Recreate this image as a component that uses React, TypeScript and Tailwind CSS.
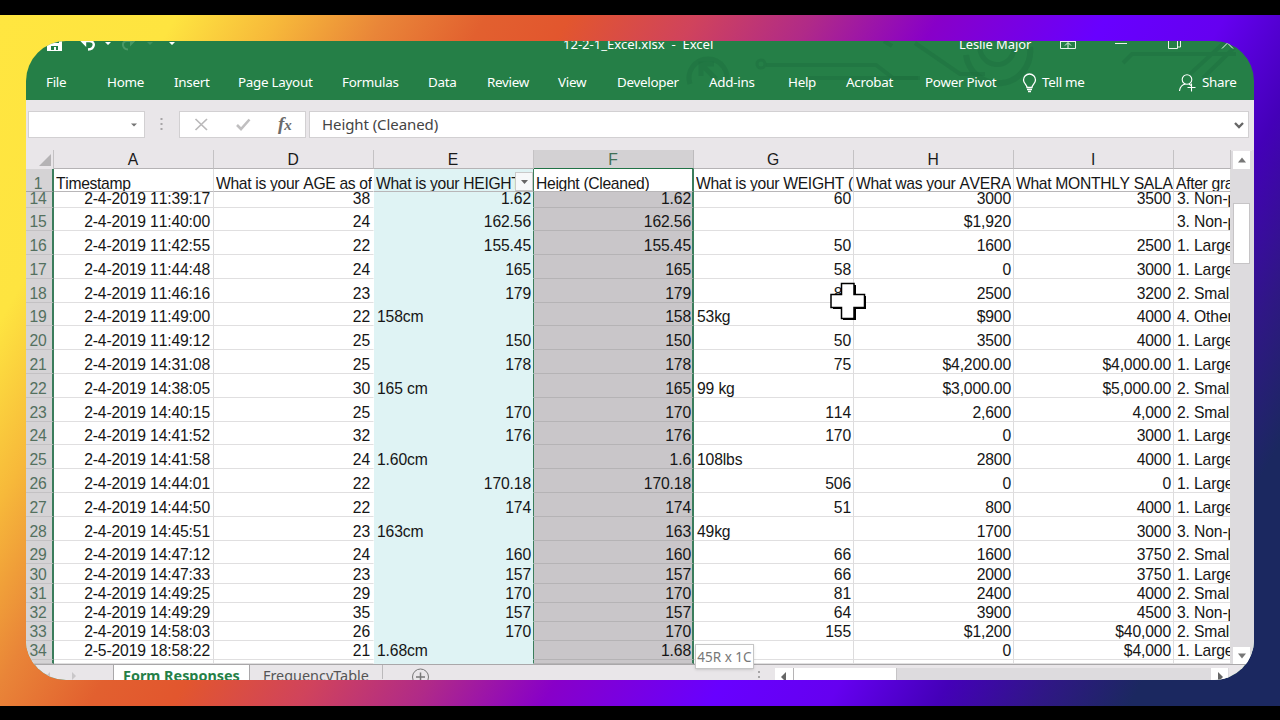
import React from 'react';
import clsx from 'clsx';

const ribbonTabs = [
  { name: 'File', width: 'w-[61px]' },
  { name: 'Home', width: 'w-[67px]' },
  { name: 'Insert', width: 'w-[64px]' },
  { name: 'Page Layout', width: 'w-[104px]' },
  { name: 'Formulas', width: 'w-[86px]' },
  { name: 'Data', width: 'w-[59px]' },
  { name: 'Review', width: 'w-[71px]' },
  { name: 'View', width: 'w-[59px]' },
  { name: 'Developer', width: 'w-[92px]' },
  { name: 'Add-ins', width: 'w-[79px]' },
  { name: 'Help', width: 'w-[58px]' },
  { name: 'Acrobat', width: 'w-[79px]' },
  { name: 'Power Pivot', width: 'w-[97px]' },
];

const columns = [
  { id: 'A', width: 'w-[160px]', title: 'Timestamp' },
  { id: 'D', width: 'w-[160px]', title: 'What is your AGE as of' },
  { id: 'E', width: 'w-[160px]', title: 'What is your HEIGHT' },
  { id: 'F', width: 'w-[160px]', title: 'Height (Cleaned)' },
  { id: 'G', width: 'w-[160px]', title: 'What is your WEIGHT (' },
  { id: 'H', width: 'w-[160px]', title: 'What was your AVERA' },
  { id: 'I', width: 'w-[160px]', title: 'What MONTHLY SALA' },
  { id: '', width: 'w-[57px]', title: 'After gra' },
];

const LARGE = '1. Large';
const SMALL = '2. Small';
const NONPROFIT = '3. Non-p';

// [row, timestamp, age, height, cleaned height, weight, average, salary, employer]
const rows: string[][] = [
  ['14', '2-4-2019 11:39:17', '38', '1.62', '1.62', '60', '3000', '3500', NONPROFIT],
  ['15', '2-4-2019 11:40:00', '24', '162.56', '162.56', '', '$1,920', '', NONPROFIT],
  ['16', '2-4-2019 11:42:55', '22', '155.45', '155.45', '50', '1600', '2500', LARGE],
  ['17', '2-4-2019 11:44:48', '24', '165', '165', '58', '0', '3000', LARGE],
  ['18', '2-4-2019 11:46:16', '23', '179', '179', '85', '2500', '3200', SMALL],
  ['19', '2-4-2019 11:49:00', '22', '158cm', '158', '53kg', '$900', '4000', '4. Other'],
  ['20', '2-4-2019 11:49:12', '25', '150', '150', '50', '3500', '4000', LARGE],
  ['21', '2-4-2019 14:31:08', '25', '178', '178', '75', '$4,200.00', '$4,000.00', LARGE],
  ['22', '2-4-2019 14:38:05', '30', '165 cm', '165', '99 kg', '$3,000.00', '$5,000.00', SMALL],
  ['23', '2-4-2019 14:40:15', '25', '170', '170', '114', '2,600', '4,000', SMALL],
  ['24', '2-4-2019 14:41:52', '32', '176', '176', '170', '0', '3000', LARGE],
  ['25', '2-4-2019 14:41:58', '24', '1.60cm', '1.6', '108lbs', '2800', '4000', LARGE],
  ['26', '2-4-2019 14:44:01', '22', '170.18', '170.18', '506', '0', '0', LARGE],
  ['27', '2-4-2019 14:44:50', '22', '174', '174', '51', '800', '4000', LARGE],
  ['28', '2-4-2019 14:45:51', '23', '163cm', '163', '49kg', '1700', '3000', NONPROFIT],
  ['29', '2-4-2019 14:47:12', '24', '160', '160', '66', '1600', '3750', SMALL],
  ['30', '2-4-2019 14:47:33', '23', '157', '157', '66', '2000', '3750', LARGE],
  ['31', '2-4-2019 14:49:25', '29', '170', '170', '81', '2400', '4000', SMALL],
  ['32', '2-4-2019 14:49:29', '35', '157', '157', '64', '3900', '4500', NONPROFIT],
  ['33', '2-4-2019 14:58:03', '26', '170', '170', '155', '$1,200', '$40,000', SMALL],
  ['34', '2-5-2019 18:58:22', '21', '1.68cm', '1.68', '', '0', '$4,000', LARGE],
  ['', '', '', '', '', '', '', '', ''],
];

function rowHeight(index: number) {
  if (index === 0) return 'h-[15.5px]';
  if (index === rows.length - 1) return 'h-[4.2px]';
  return index <= 15 ? 'h-[23.8px]' : 'h-[19.06px]';
}

// Free text (with units) sits left, numbers and dates sit right
function isText(value: string, col: number) {
  return col === 7 || /[a-z]/.test(value);
}

function Circuit() {
  return (
    <svg className="absolute inset-0 h-[59px] w-[1228px]" viewBox="26 41 1228 59" fill="none" stroke="#1c6f3e" strokeOpacity="0.45">
      <path d="M690 84a19 19 0 1 1 36 0" strokeWidth="5" />
      <path d="M716 79 702 65M701 76V64h13" strokeWidth="5" />
      <circle cx="761" cy="64" r="4" strokeWidth="3" />
      <path d="M766 65h110l17 13h25" strokeWidth="4" />
      <path d="M808 78h112M915 43l45 31h25M884 41l8 5" strokeWidth="4" />
      <path d="M966 55a30 30 0 0 0 64-8" strokeWidth="6" />
      <path d="M980 46a16 16 0 0 0 34 3" strokeWidth="5" />
      <path d="M1123 63 1132 54h104M1190 74l36-33M1203 78l38-37" strokeWidth="4" />
    </svg>
  );
}

function TitleBar() {
  return (
    <div className="relative -mt-[10px] flex h-[33px] shrink-0 text-white">
      <svg className="h-[26px] w-[160px] shrink-0" viewBox="26 31 160 26" fill="none">
        <path d="M47 36h15v15H47z" fill="#fff" />
        <path d="M50 36h9v7h-9zM51 46h7v4h-2v-3h-2v3h-3z" fill="#257f47" />
        <path d="M79 38l6 6v-3h4c7 0 6 8-1 8.500" stroke="#fff" strokeWidth="2.4" />
        <path d="M105 42h6l-3 3zM169 42h6l-3 3z" fill="#fff" />
        <path d="M137 38l-6 6v-3h-4c-6 0-5 8 1 8.500" stroke="#58a373" strokeOpacity="0.7" strokeWidth="2" />
        <path d="M147 42h6l-3 3z" fill="#3f9060" />
      </svg>
      <div className="ml-[377px] h-[26px] w-[152px] shrink-0 whitespace-pre text-[13.100px] leading-[26px] tracking-[-0.03px]">12-2-1_Excel.xlsx  -  Excel</div>
      <div className="ml-[244px] h-[26px] w-[80px] shrink-0 whitespace-nowrap text-[12.900px] leading-[26px] tracking-[-0.05px]">Leslie Major</div>
      <svg className="ml-[11px] h-[26px] w-[200px] shrink-0" viewBox="1050 31 200 26" fill="none" stroke="#e9f4ec">
        <path d="M1060.500 38.500h15v10h-15zM1068 49v-6M1065 45.500l3-3 3 3M1061 41.500h14M1115 43.500h12" />
        <path d="M1168.500 40.500h9v8h-9zM1171 40v-2h9.500v9h-2.500M1222 48.500l11-11M1222 37.500l11 11" />
      </svg>
    </div>
  );
}

function Ribbon() {
  return (
    <div className="relative flex h-9 shrink-0 items-center pt-px pl-5 text-[13.400px] tracking-[-0.27px] whitespace-nowrap text-white">
      {ribbonTabs.map((tab) => (
        <div key={tab.name} className={clsx('shrink-0', tab.width)}>{tab.name}</div>
      ))}
      <svg className="h-5 w-4 shrink-0" viewBox="0 0 16 20" fill="none" stroke="#fff" strokeWidth="1.3">
        <path d="M5 14.500c0-3-3.500-4-3.500-7.500a6 6 0 0 1 12 0c0 3.500-3.500 4.500-3.500 7.500zM5 16.500h5M6 18.500h3" />
      </svg>
      <div className="ml-1 w-[137px] shrink-0">Tell me</div>
      <svg className="h-5 w-[17px] shrink-0" viewBox="0 0 17 20" fill="none" stroke="#fff" strokeWidth="1.1">
        <circle cx="8" cy="6.500" r="4.800" />
        <path d="M.5 18c.5-4 2.500-6.500 6-7M10 11l2 1.500M12.500 10.500v8M8.500 14.500h8" />
      </svg>
      <div className="ml-1.5">Share</div>
    </div>
  );
}

function FormulaBar() {
  return (
    <div className="flex h-[50px] shrink-0 bg-[#e9e6e9] pt-[11px] pl-0.5">
      <div className="flex h-[27px] w-[117px] shrink-0 items-center justify-end border border-[#d2d0d2] bg-white pr-[7px]">
        <svg className="h-1 w-1.5" viewBox="0 0 6 4"><path d="M0 .5h6L3 3.500z" fill="#747474" /></svg>
      </div>
      <svg className="h-[27px] w-[34px] shrink-0" viewBox="0 0 34 27" fill="#a7a5a7">
        <path d="M15.500 7h2v2h-2zM15.500 12h2v2h-2zM15.500 17h2v2h-2z" />
      </svg>
      <div className="flex h-[27px] w-[127px] shrink-0 items-center border border-[#d2d0d2] bg-white">
        <svg className="ml-[14px] h-[13px] w-[15px]" viewBox="0 0 15 13" fill="none" stroke="#bab9ba" strokeWidth="1.700"><path d="M1.500 1l11.500 11M13 1 1.500 12" /></svg>
        <svg className="ml-[27px] h-[13px] w-[15px]" viewBox="0 0 15 13" fill="none" stroke="#c0bfc0" strokeWidth="2.600"><path d="M1 7l4 4 8.500-9.500" /></svg>
        <span className="-mt-0.5 ml-[27px] font-['Liberation_Serif',serif] text-[19px] leading-none font-bold text-[#6b6b6b] italic">f<span className="text-[15px]">x</span></span>
      </div>
      <div className="ml-[3px] flex h-[27px] w-[940px] shrink-0 items-center justify-between border border-[#d2d0d2] bg-white pr-[4px] pl-3">
        <span className="text-[15px] tracking-[-0.08px] text-[#444]">Height (Cleaned)</span>
        <svg className="h-2 w-2.5" viewBox="0 0 10 8" fill="none" stroke="#666" strokeWidth="2.300"><path d="M1 2l4 4 4-4" /></svg>
      </div>
    </div>
  );
}

function ColumnHeaders() {
  return (
    <div className="flex h-[18.500px] shrink-0 bg-[#e9e6e9]">
      <div className="flex w-[28px] shrink-0 items-end justify-end border-r border-[#c4c2c4] pr-0.5 pb-[3px]">
        <svg className="h-3 w-3" viewBox="0 0 12 12"><path d="M12 0v12H0z" fill="#b5b3b5" /></svg>
      </div>
      {columns.map((col) => (
        <div
          key={col.title}
          className={clsx(
            'shrink-0 border-b pt-px pr-px text-center leading-[18px]',
            col.width,
            col.id === 'F'
              ? 'border-r border-r-[#bdbbbd] border-b-[#217346] bg-[#d3d1d3] text-[#3f6f55]'
              : 'border-r border-r-[#c4c2c4] border-b-[#b5b3b5] text-[#1a1a1a]',
          )}
        >
          {col.id}
        </div>
      ))}
    </div>
  );
}

function HeaderRow() {
  return (
    <div className="flex h-[23.500px] shrink-0 items-stretch">
      <div className="flex w-[28px] shrink-0 items-end justify-center border-r-2 border-b border-r-[#3b7d5c] border-b-[#a5a3a5] bg-[#d5d3d5] pr-0.5 leading-[15px] text-[#53705f]">1</div>
      {columns.map((col) => (
        <div
          key={col.title}
          className={clsx(
            'flex shrink-0 items-end overflow-hidden border-r border-b border-b-[#b8b6b8] pl-0.5 text-[15.700px] leading-[18px] tracking-[-0.33px] whitespace-nowrap',
            col.width,
            col.id === 'E' && 'justify-between border-r-[#3b7d5c] bg-[#dff3f4]',
            col.id === 'F' && 'border-r-2 border-r-[#3b7d5c]',
            col.id === 'D' && 'border-r-transparent',
            !['D', 'E', 'F'].includes(col.id) && 'border-r-[#dddcdd]',
          )}
        >
          <span className="-mb-0.5 min-w-0 overflow-hidden">{col.title}</span>
          {col.id === 'E' && (
            <span className="flex h-[19px] w-[18px] shrink-0 items-center justify-center border border-[#c9c9c9] bg-[#f6f8f9]">
              <svg className="h-1 w-[7px]" viewBox="0 0 7 4"><path d="M0 0h7L3.500 4z" fill="#666" /></svg>
            </span>
          )}
        </div>
      ))}
    </div>
  );
}

function DataRow({ row, index }: { row: string[]; index: number }) {
  const [num, ...cells] = row;
  return (
    <div className={clsx('flex shrink-0 items-stretch overflow-hidden', rowHeight(index))}>
      <div className="flex w-[28px] shrink-0 items-end justify-center border-r-2 border-b border-r-[#3b7d5c] border-b-[#c3c1c3] bg-[#d5d3d5] pr-0.5 leading-[16px] text-[#53705f]">
        {num}
      </div>
      {cells.map((value, i) => (
        <div
          key={i}
          className={clsx(
            'flex shrink-0 items-end overflow-hidden border-r border-b leading-[16px] whitespace-nowrap',
            columns[i].width,
            isText(value, i) ? 'pl-[3px]' : 'justify-end',
            i === 0 && 'border-r-[#dddcdd] border-b-[#e0dfe0] pr-[3px]',
            i === 1 && 'border-r-transparent border-b-[#e0dfe0] pr-[3px]',
            i === 2 && 'border-r-[#3b7d5c] border-b-transparent bg-[#dff3f4] pr-0.5',
            i === 3 && 'border-r-2 border-r-[#3b7d5c] border-b-[#b5b3b5] bg-[#c9c6c9] pr-px',
            i > 3 && 'border-r-[#dddcdd] border-b-[#e0dfe0] pr-0.5',
          )}
        >
          {value}
        </div>
      ))}
    </div>
  );
}

function VerticalScrollbar() {
  return (
    <div className="flex w-[23px] shrink-0 flex-col bg-[#dddbde] pr-1 pl-0.5">
      <div className="-mx-0.5 h-[1px] shrink-0 bg-[#e9e6e9]" />
      <div className="flex h-[18px] shrink-0 items-center justify-center bg-white">
        <svg className="h-1.5 w-2" viewBox="0 0 8 6"><path d="M0 5.500h8L4 .5z" fill="#777" /></svg>
      </div>
      <div className="h-[34px] shrink-0" />
      <div className="h-[61px] shrink-0 border border-[#c6c4c6] bg-white" />
      <div className="flex-1" />
      <div className="flex h-[17px] shrink-0 items-center justify-center bg-white">
        <svg className="h-1.5 w-2" viewBox="0 0 8 6"><path d="M0 .5h8L4 5.500z" fill="#777" /></svg>
      </div>
    </div>
  );
}

function SheetTabs() {
  return (
    <div className="flex h-4 shrink-0 overflow-hidden border-t border-[#a9a7a9] bg-[#e9e6e9] whitespace-nowrap">
      <div className="w-[88px] shrink-0 border-r border-[#a9a7a9]">
        <svg className="h-4 w-[87px]" viewBox="26 665 87 16" fill="#c9c7c9"><path d="M72 672v8l4-4zM50 672v8l-4-4z" /></svg>
      </div>
      <div className="-mt-px w-[135px] shrink-0 bg-white pl-[9px] text-[14.400px] leading-6 font-bold text-[#257f47]">Form Responses</div>
      <div className="w-[133px] shrink-0 border-l border-[#a9a7a9] pl-[13px] text-[14.400px] leading-[22px] text-[#555]">FrequencyTable</div>
      <div className="h-3.5 w-[30px] shrink-0 border-l border-[#bbb9bb]" />
      <svg className="h-4 w-[18px] shrink-0" viewBox="412 665 18 16" fill="none" stroke="#777">
        <circle cx="420.500" cy="677" r="8" />
        <path d="M420.500 672.500v9M416 677h9" strokeWidth="1.500" />
      </svg>
      <svg className="ml-[325px] h-4 w-2 shrink-0" viewBox="0 0 8 16" fill="#a7a5a7"><path d="M3 6h2v2H3zM3 11h2v2H3z" /></svg>
      <div className="mt-[3px] ml-[12px] flex h-4 w-[454px] shrink-0 bg-[#dddbde]">
        <div className="w-[19px] shrink-0 border-r border-[#b5b3b5] bg-white">
          <svg className="h-4 w-[17px]" viewBox="0 0 17 16"><path d="M11 4v10L6 9z" fill="#666" /></svg>
        </div>
        <div className="w-[103px] shrink-0 border-r border-[#c6c4c6] bg-white" />
        <div className="flex-1" />
        <div className="mr-[1px] w-[17px] shrink-0 bg-white">
          <svg className="h-4 w-[17px]" viewBox="0 0 17 16"><path d="M7 4v10l5-5z" fill="#666" /></svg>
        </div>
      </div>
    </div>
  );
}

export default function App() {
  return (
    <div className="h-[720px] w-[1280px] overflow-hidden bg-black pt-[15px]">
      <div className="h-[691px] bg-[linear-gradient(120deg,#ffe640_0%,#fee440_10.500%,#f7b93a_16.700%,#e98538_23%,#e2602f_29%,#e2562e_34%,#d0435c_41.500%,#b02a88_48.500%,#8800c8_56%,#6800ff_66%,#6500f0_73%,#4400b8_79.500%,#2f1785_85.500%,#1b2860_91%,#1b2860_100%)] px-[26px] pt-[26px]">
        <div className="relative flex h-[639px] w-[1228px] flex-col overflow-hidden rounded-[40px] bg-[#257f47] font-['Noto_Sans',sans-serif]">
          <Circuit />
          <TitleBar />
          <Ribbon />
          <FormulaBar />
          <div className="flex h-[514px] shrink-0 bg-white font-['Liberation_Sans',sans-serif] text-[15.700px] tracking-[-0.14px] text-[#161616] [font-kerning:none]">
            <div className="flex w-[1205px] shrink-0 flex-col overflow-hidden">
              <ColumnHeaders />
              <HeaderRow />
              {rows.map((row, i) => (
                <DataRow key={i} row={row} index={i} />
              ))}
            </div>
            <VerticalScrollbar />
          </div>
          <SheetTabs />

          {/* Selection size tooltip */}
          <div className="absolute top-[603px] left-[669px] flex h-[25px] w-[59px] items-center justify-center border border-[#c6c6c6] bg-white pt-0.5 text-[13.500px] whitespace-nowrap text-[#777] shadow-sm">
            45R x 1C
          </div>

          {/* Cell-select cursor */}
          <svg className="absolute top-[240px] left-[803px] h-[40px] w-[40px]" viewBox="0 0 40 40">
            <path d="M14 4h13v11h10v13H27v11H14V28H4V15h10z" fill="#000" />
            <path d="M12.500 2.500h12.500v11h10.500v13H25v11H12.500v-11H2v-13h10.500z" fill="#fff" stroke="#000" strokeWidth="1.500" />
          </svg>
        </div>
      </div>
    </div>
  );
}
